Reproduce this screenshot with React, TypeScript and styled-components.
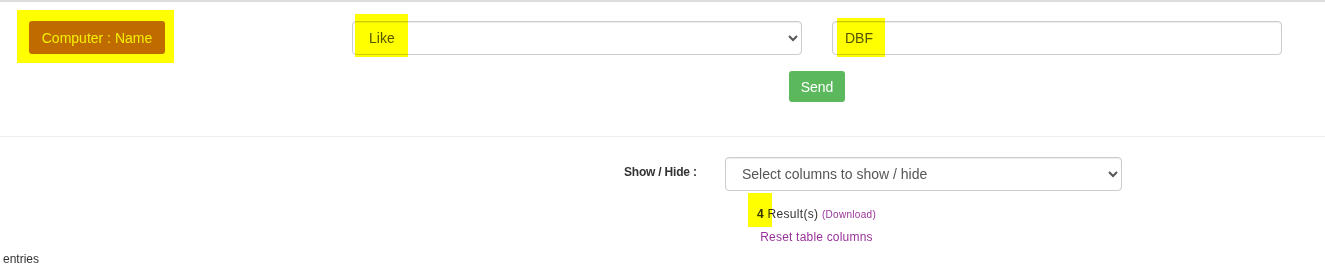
import React from "react";
import styled, { createGlobalStyle } from "styled-components";

const Global = createGlobalStyle`
  html, body { margin: 0; padding: 0; background: #fff; }
  body {
    font-family: "Liberation Sans", Arial, Helvetica, sans-serif;
    font-size: 14px;
    color: #333;
  }
`;

const Page = styled.div`
  border-top: 2px solid #ddd;
`;

const TopSection = styled.section`
  display: flex;
  align-items: flex-start;
  padding: 8px 0 0 17px;
  height: 135px;
  box-sizing: border-box;
  border-bottom: 1px solid #eee;
`;

const FieldTag = styled.div`
  background: #ffff00;
  padding: 11px 9px 9px 12px;
  width: 157px;
  flex: none;
  box-sizing: border-box;
  margin-right: 178px;
`;

const TagButton = styled.button`
  display: block;
  width: 136px;
  height: 33px;
  border: none;
  border-radius: 3px;
  background: #bf6b00;
  color: #f4f000;
  font-family: "Liberation Sans", Arial, sans-serif;
  font-size: 14px;
  padding: 0;
`;

const FormGroup = styled.div`
  display: flex;
  flex-direction: column;
  align-items: center;
  margin-top: 11px;
  width: 930px;
  flex: none;
`;

const FieldsRow = styled.div`
  display: flex;
  gap: 30px;
`;

const Holder = styled.div`
  position: relative;
`;

const Mark = styled.span<{ $l: number; $t: number; $w: number; $h: number }>`
  position: absolute;
  left: ${(p) => p.$l}px;
  top: ${(p) => p.$t}px;
  width: ${(p) => p.$w}px;
  height: ${(p) => p.$h}px;
  background: #ffff00;
  mix-blend-mode: multiply;
  pointer-events: none;
`;

const Select = styled.select<{ $w: number }>`
  display: block;
  width: ${(p) => p.$w}px;
  height: 34px;
  box-sizing: border-box;
  padding: 6px 12px;
  border: 1px solid #ccc;
  border-radius: 4px;
  background: #fff;
  color: #555;
  font-family: "Liberation Sans", Arial, sans-serif;
  font-size: 14px;
  box-shadow: inset 0 1px 1px rgba(0, 0, 0, 0.075);
`;

const Input = styled.input`
  display: block;
  width: 450px;
  height: 34px;
  box-sizing: border-box;
  padding: 6px 12px;
  border: 1px solid #ccc;
  border-radius: 4px;
  color: #555;
  font-family: "Liberation Sans", Arial, sans-serif;
  font-size: 14px;
  box-shadow: inset 0 1px 1px rgba(0, 0, 0, 0.075);
`;

const SendButton = styled.button`
  margin-top: 16px;
  height: 31px;
  padding: 0 12px;
  border: none;
  border-radius: 3px;
  background: #5cb85c;
  color: #fff;
  font-family: "Liberation Sans", Arial, sans-serif;
  font-size: 14px;
`;

const BottomSection = styled.section`
  padding-top: 20px;
`;

const ColumnsRow = styled.div`
  display: flex;
  align-items: flex-start;
  padding-left: 624px;
  gap: 30px;
`;

const Label = styled.label`
  font-size: 12px;
  font-weight: bold;
  line-height: 17px;
  margin-top: 7px;
  width: 71px;
  white-space: nowrap;
  letter-spacing: -0.2px;
`;

const Results = styled.div`
  margin: 12px 0 0 352px;
  width: 929px;
  text-align: center;
  font-size: 12px;
  line-height: 23px;
`;

const Line = styled.div<{ $spacing?: number }>`
  letter-spacing: ${(p) => p.$spacing ?? 0}px;
`;

const Count = styled.span`
  position: relative;
  font-weight: bold;
`;

const SmallLink = styled.a`
  font-size: 10px;
  color: #993399;
  text-decoration: none;
`;

const ResetLink = styled.a`
  color: #993399;
  text-decoration: none;
`;

const Entries = styled.div`
  font-size: 12px;
  line-height: 17px;
  padding-left: 3px;
  margin-top: 2px;
`;

export default function App() {
  return (
    <Page>
      <Global />
      <TopSection>
        <FieldTag>
          <TagButton>Computer : Name</TagButton>
        </FieldTag>
        <FormGroup>
          <FieldsRow>
            <Holder>
              <Select $w={450} defaultValue="like">
                <option value="like">Like</option>
                <option value="eq">Equal</option>
              </Select>
              <Mark $l={3} $t={-7} $w={53} $h={43} />
            </Holder>
            <Holder>
              <Input defaultValue="DBF" />
              <Mark $l={5} $t={-3} $w={48} $h={39} />
            </Holder>
          </FieldsRow>
          <SendButton>Send</SendButton>
        </FormGroup>
      </TopSection>
      <BottomSection>
        <ColumnsRow>
          <Label>Show / Hide :</Label>
          <Select $w={397} defaultValue="">
            <option value="">Select columns to show / hide</option>
          </Select>
        </ColumnsRow>
        <Results>
          <Line $spacing={0.3}>
            <Count>
              4
              <Mark $l={-9} $t={-14} $w={24} $h={34} />
            </Count>{" "}
            Result(s) <SmallLink href="#">(Download)</SmallLink>
          </Line>
          <Line $spacing={0.2}>
            <ResetLink href="#">Reset table columns</ResetLink>
          </Line>
        </Results>
        <Entries>entries</Entries>
      </BottomSection>
    </Page>
  );
}
